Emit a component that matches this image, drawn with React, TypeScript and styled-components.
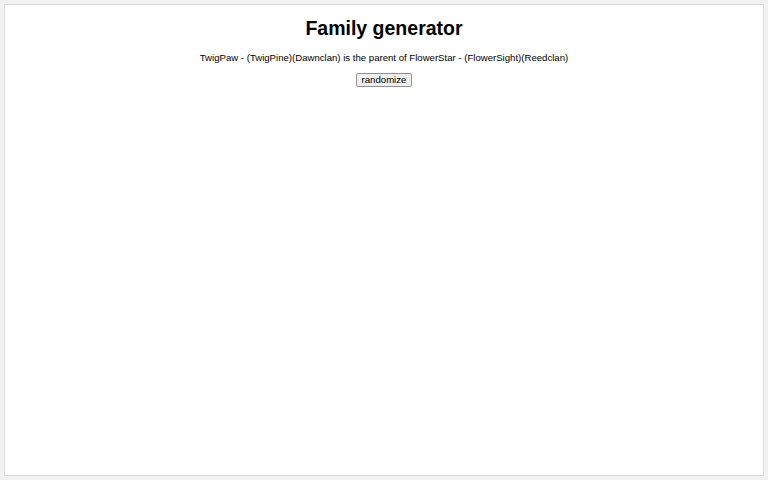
import React, { FC, ReactElement, useState } from "react";
import styled, { createGlobalStyle } from "styled-components";

const GlobalStyle = createGlobalStyle`
  html, body {
    margin: 0;
    padding: 0;
    background: #f2f2f2;
    font-family: "Liberation Sans", Arial, sans-serif;
  }
`;

const parents = [
  "TwigPaw - (TwigPine)(Dawnclan) is the parent of FlowerStar - (FlowerSight)(Reedclan)",
];

const App: FC = (): ReactElement => {
  const [line] = useState(parents[0]);
  return (
    <>
      <GlobalStyle />
      <Page>
        <Panel>
          <Title>Family generator</Title>
          <Result>{line}</Result>
          <RandomButton>randomize</RandomButton>
        </Panel>
      </Page>
    </>
  );
};

export default App;

const Page = styled.div`
  box-sizing: border-box;
  height: 480px;
  padding: 4px;
`;

const Panel = styled.div`
  box-sizing: border-box;
  height: 472px;
  background: #ffffff;
  border: 1px solid #dcdcdc;
  display: flex;
  flex-direction: column;
  align-items: center;
  padding-top: 11px;
`;

const Title = styled.h1`
  margin: 0;
  font-size: 19.5px;
  font-weight: bold;
  color: #000;
  line-height: 24px;
`;

const Result = styled.p`
  margin: 12px 0 0;
  font-size: 9.6px;
  line-height: 12px;
  color: #000;
`;

const RandomButton = styled.button`
  margin-top: 9px;
  font-family: "Liberation Sans", Arial, sans-serif;
  font-size: 9.6px;
  line-height: 12px;
  padding: 0 5px;
  color: #000;
  background: #efefef;
  border: 1px solid #8f8f8f;
  border-radius: 2px;
`;
